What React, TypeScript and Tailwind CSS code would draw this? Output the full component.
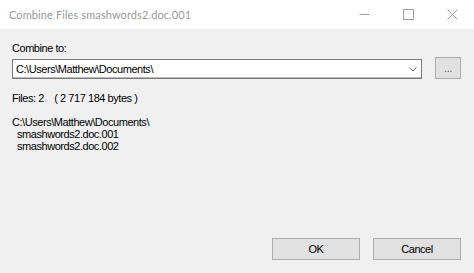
const ui = "font-['Liberation_Sans',Arial,sans-serif] text-[11px] leading-[12px] tracking-[-0.45px] text-black";

function TitleBar() {
  return (
    <div className="flex h-[29px] items-center bg-white">
      <div className="flex-1 pl-[9px] font-['Lato',sans-serif] text-[11px] tracking-[0.1px] text-[#9a9a9a]">
        Combine Files smashwords2.doc.001
      </div>
      <div className="flex h-full items-center">
        <div className="flex h-full w-[44px] items-center justify-center">
          <svg width="11" height="11" viewBox="0 0 11 11">
            <path d="M0.5 5.5 H10.5" stroke="#a0a0a0" strokeWidth="1" />
          </svg>
        </div>
        <div className="flex h-full w-[44px] items-center justify-center">
          <svg width="11" height="11" viewBox="0 0 11 11">
            <rect x="0.5" y="0.5" width="10" height="10" fill="none" stroke="#a0a0a0" strokeWidth="1" />
          </svg>
        </div>
        <div className="flex h-full w-[44px] items-center justify-center">
          <svg width="11" height="11" viewBox="0 0 11 11">
            <path d="M0.5 0.5 L10.5 10.5 M10.5 0.5 L0.5 10.5" stroke="#a0a0a0" strokeWidth="1" />
          </svg>
        </div>
      </div>
    </div>
  );
}

function Button({ label, className = '' }: { label: string; className?: string }) {
  return (
    <div
      className={`flex items-center justify-center border border-[#adadad] bg-[#e1e1e1] ${className}`}
    >
      {label}
    </div>
  );
}

export default function App() {
  return (
    <div className={`flex h-[273px] w-[474px] flex-col overflow-hidden bg-white ${ui}`}>
      <TitleBar />
      <div className="flex flex-1 flex-col bg-[#f0f0f0] px-[12px] pb-[13px] pt-[13px]">
        <div className="h-[13px]">Combine to:</div>
        <div className="mt-[4px] flex items-center gap-[13px]">
          <div className="flex h-[20px] w-[410px] items-center border border-[#7a7a7a] bg-white pl-[3px] pr-[4px] shadow-[inset_0_-1px_0_#b9b9b9]">
            <span className="flex-1">C:\Users\Matthew\Documents\</span>
            <svg width="8" height="5" viewBox="0 0 8 5">
              <path d="M0.5 0.5 L4 4 L7.5 0.5" fill="none" stroke="#606060" strokeWidth="1" />
            </svg>
          </div>
          <Button label="..." className="-mt-[2px] h-[22px] w-[26px] text-[#555]" />
        </div>
        <div className="mt-[13px] whitespace-pre">Files: 2    ( 2 717 184 bytes )</div>
        <div className="mt-[12px] flex flex-col">
          <div>C:\Users\Matthew\Documents\</div>
          <div className="pl-[5px]">smashwords2.doc.001</div>
          <div className="pl-[5px]">smashwords2.doc.002</div>
        </div>
        <div className="mt-auto flex justify-end gap-[13px] pr-px">
          <Button label="OK" className="h-[22px] w-[88px]" />
          <Button label="Cancel" className="h-[22px] w-[88px]" />
        </div>
      </div>
    </div>
  );
}
